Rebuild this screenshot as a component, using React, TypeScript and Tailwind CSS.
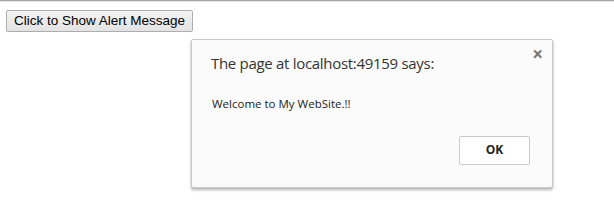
import React from 'react';

const App: React.FC = () => {
  return (
    <div className="w-[614px] h-[222px] bg-white overflow-hidden">
      <div className="h-[2px] border-t border-[#a5a5a5] bg-[#e8e8e8]" />
      <div className="pl-[6px] pt-[8px]">
        <button className="block h-[22px] px-[7px] border border-[#adadad] rounded-[2px] bg-gradient-to-b from-[#f3f3f3] to-[#e3e3e3] text-[13.5px] text-black font-['Liberation_Sans',Arial,sans-serif] leading-none">
          Click to Show Alert Message
        </button>
      </div>
      {/* alert dialog */}
      <div className="ml-[191px] mt-[7px] w-[362px] h-[149px] border border-[#c8c8c8] rounded-[2px] bg-[#fbfbfb] shadow-[0_2px_3px_rgba(0,0,0,0.3)] relative font-['Open_Sans','Noto_Sans',sans-serif]">
        <span className="absolute right-[9px] top-[5px] text-[19px] font-bold text-[#777] leading-none">×</span>
        <div className="pl-[19px] pt-[12px] text-[15px] text-[#333] tracking-[-0.3px]">
          The page at localhost:49159 says:
        </div>
        <div className="pl-[20px] pt-[20px] text-[11.5px] text-[#222]">Welcome to My WebSite.!!</div>
        <div className="flex justify-end pr-[22px] pt-[24px]">
          <button className="w-[71px] h-[29px] border border-[#c9c9c9] rounded-[2px] bg-white text-[12px] font-bold text-[#222]">
            OK
          </button>
        </div>
      </div>
    </div>
  );
};

export default App;
